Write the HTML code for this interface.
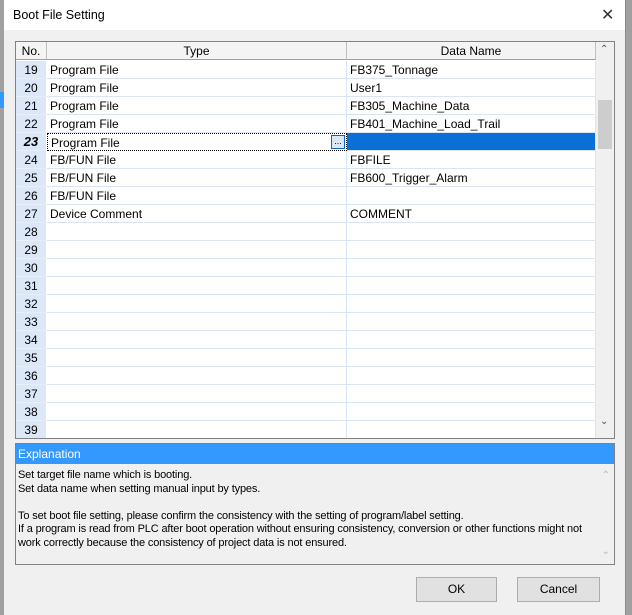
<!DOCTYPE html><html><head><style>
body{margin:0;width:632px;height:615px;overflow:hidden;background:#a0a0a0;font-family:"Liberation Sans",sans-serif;font-size:12px;position:relative}
.dlg{position:absolute;left:4px;top:0;width:621px;height:615px;background:#f0f0f0;border-right:1px solid #888}
.title{position:absolute;left:0;top:0;width:621px;height:30px;background:#fff}
.title span{position:absolute;left:9px;top:8px;font-size:12.5px;color:#000}
.grid{position:absolute;left:11px;top:41px;width:598px;height:396px;border:1px solid #828282;background:#fff;overflow:hidden}
.hdr{position:absolute;top:0;height:18px;border-bottom:1px solid #a0a0a0;background:#f4f4f4;text-align:center;line-height:18px;border-right:1px solid #c0c0c0;box-sizing:border-box}
.row{position:absolute;left:0;height:18px;width:580px}
.no{position:absolute;left:0;width:30px;height:18px;background:#dce8f8;text-align:center;line-height:18px;font-size:12px;border-bottom:1px solid #e6eef8;box-sizing:border-box}
.c{position:absolute;height:18px;line-height:18px;border-right:1px solid #dae5f3;border-bottom:1px solid #dae5f3;box-sizing:border-box;padding-left:3px;white-space:nowrap}
.sb{position:absolute;left:580px;top:0;width:18px;height:396px;background:#f0f0f0}
.btn{position:absolute;top:577px;height:25px;background:#e1e1e1;border:1px solid #adadad;box-sizing:border-box;text-align:center;line-height:23px}
</style></head><body>
<div style="position:absolute;left:0;top:92px;width:4px;height:16px;background:#3399ff"></div>
<div class="dlg">
<div class="title"><span>Boot File Setting</span><span style="left:597px;top:5px;font-size:16px;color:#333">✕</span></div>
<div class="grid">
<div class="hdr" style="left:0;width:31px">No.</div>
<div class="hdr" style="left:31px;width:300px">Type</div>
<div class="hdr" style="left:331px;width:249px">Data Name</div>
<div id="rows"></div>
<div class="sb"><div style="position:absolute;left:2px;top:58px;width:14px;height:49px;background:#cdcdcd"></div>
<div style="position:absolute;left:4px;top:2px;font-size:10px;color:#555">&#8963;</div>
<div style="position:absolute;left:4px;top:374px;font-size:10px;color:#555">&#8964;</div></div>
</div>
<div style="position:absolute;left:11px;top:443px;width:598px;height:120px;border:1px solid #828282;background:#f0f0f0">
<div style="height:20px;background:#3399ff;color:#fff;line-height:20px;padding-left:2px">Explanation</div>
<div style="padding:5px 14px 0 2px;line-height:13.5px;font-size:11px;letter-spacing:-0.15px;color:#000">Set target file name which is booting.<br>Set data name when setting manual input by types.<br><br>To set boot file setting, please confirm the consistency with the setting of program/label setting.<br>If a program is read from PLC after boot operation without ensuring consistency, conversion or other functions might not<br>work correctly because the consistency of project data is not ensured.</div>
<div style="position:absolute;right:4px;top:26px;font-size:10px;color:#bbb">&#8963;</div>
<div style="position:absolute;right:4px;top:102px;font-size:10px;color:#bbb">&#8964;</div>
</div>
<div class="btn" style="left:412px;width:81px">OK</div>
<div class="btn" style="left:513px;width:83px">Cancel</div>
</div>
<script>
var d=[["Program File","FB375_Tonnage"],["Program File","User1"],["Program File","FB305_Machine_Data"],["Program File","FB401_Machine_Load_Trail"],["Program File",""],["FB/FUN File","FBFILE"],["FB/FUN File","FB600_Trigger_Alarm"],["FB/FUN File",""],["Device Comment","COMMENT"]];
var h="";
for(var i=0;i<21;i++){var n=19+i,t=d[i]||["",""],y=19+i*18;
var sel=n==23;
h+='<div class="row" style="top:'+y+'px"><div class="no"'+(sel?' style="font-weight:bold;font-style:italic;font-size:13px"':'')+'>'+n+'</div>'+
'<div class="c" style="left:31px;width:300px;'+(sel?'border:1px dotted #000;':'')+'">'+t[0]+(sel?'<span style="position:absolute;right:1px;top:1px;width:14px;height:14px;border:1px solid #0a64c8;background:#dbe7f5;font-size:9px;line-height:10px;text-align:center;box-sizing:border-box">...</span>':'')+'</div>'+
'<div class="c" style="left:331px;width:249px;'+(sel?'background:#0a6fd7;':'')+'">'+t[1]+'</div></div>';}
document.getElementById("rows").innerHTML=h;
</script>
</body></html>
